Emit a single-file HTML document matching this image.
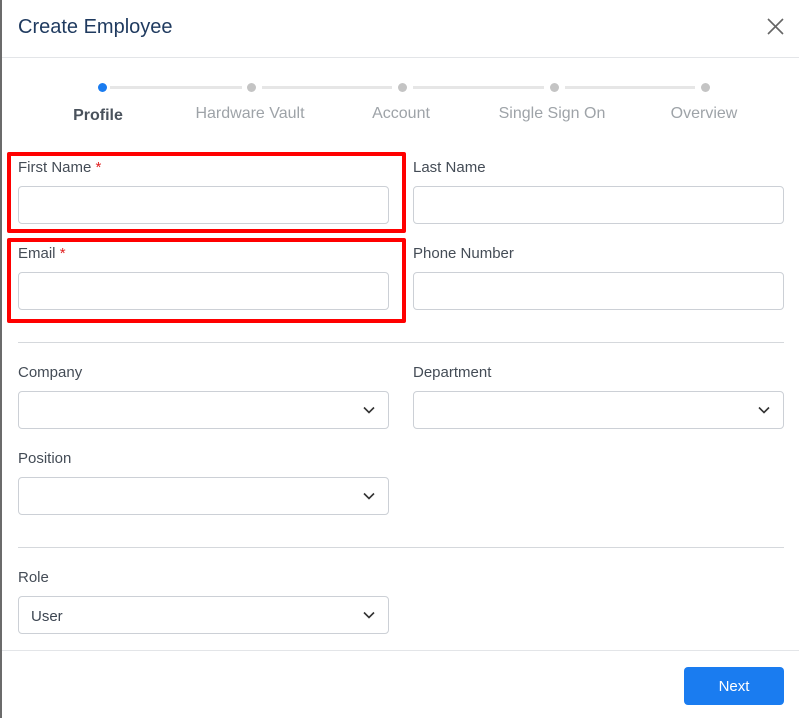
<!DOCTYPE html>
<html><head><style>
*{box-sizing:border-box;margin:0;padding:0}
body{width:799px;height:718px;background:#fff;font-family:"Liberation Sans",sans-serif;position:relative;overflow:hidden;color:#3d4652}
.a{position:absolute}
.lbl{position:absolute;font-size:15px;color:#444c56}
.inp{position:absolute;height:38px;border:1px solid #ccd0d6;border-radius:4px;background:#fff}
.chev{position:absolute;right:13px;top:14px}
.req{color:#e02020}
.red{position:absolute;border:4px solid #f00;border-radius:2px}
.dot{position:absolute;width:9px;height:9px;border-radius:50%;background:#c4c4c4;top:83px}
.line{position:absolute;height:3px;background:#e6e6e6;top:86px}
.st{position:absolute;top:105px;font-size:16px;color:#9ea3a8;text-align:center;width:160px}
.hr{position:absolute;height:1px;background:#d5d8dc}
</style></head><body>
<div class="a" style="left:0;top:0;width:2px;height:718px;background:#6b6b6b"></div>
<div class="a" style="left:18px;top:16px;font-size:20px;color:#1f3a5f">Create Employee</div>
<svg class="a" style="left:766px;top:17px" width="19" height="19" viewBox="0 0 19 19"><path d="M2 2L17 17M17 2L2 17" stroke="#666" stroke-width="1.6"/></svg>
<div class="hr" style="left:2px;top:57px;width:797px;background:#e3e5e8"></div>

<div class="line" style="left:110px;width:132px"></div>
<div class="line" style="left:262px;width:130px"></div>
<div class="line" style="left:413px;width:131px"></div>
<div class="line" style="left:565px;width:130px"></div>
<div class="dot" style="left:98px;background:#1a7cf0"></div>
<div class="dot" style="left:247px"></div>
<div class="dot" style="left:398px"></div>
<div class="dot" style="left:550px"></div>
<div class="dot" style="left:701px"></div>
<div class="st" style="left:18px;top:107px;color:#4a525c;font-weight:bold">Profile</div>
<div class="st" style="left:170px">Hardware Vault</div>
<div class="st" style="left:321px">Account</div>
<div class="st" style="left:472px">Single Sign On</div>
<div class="st" style="left:624px">Overview</div>

<div class="red" style="left:7px;top:152px;width:399px;height:81px"></div>
<div class="red" style="left:7px;top:238px;width:399px;height:85px"></div>

<div class="lbl" style="left:18px;top:159px">First Name <span class="req">*</span></div>
<div class="inp" style="left:18px;top:186px;width:371px"></div>
<div class="lbl" style="left:413px;top:159px">Last Name</div>
<div class="inp" style="left:413px;top:186px;width:371px"></div>
<div class="lbl" style="left:18px;top:245px">Email <span class="req">*</span></div>
<div class="inp" style="left:18px;top:272px;width:371px"></div>
<div class="lbl" style="left:413px;top:245px">Phone Number</div>
<div class="inp" style="left:413px;top:272px;width:371px"></div>

<div class="hr" style="left:18px;top:342px;width:766px"></div>

<div class="lbl" style="left:18px;top:364px">Company</div>
<div class="inp" style="left:18px;top:391px;width:371px"><svg class="chev" width="12" height="8" viewBox="0 0 12 8"><path d="M1 1.5L6 6.5L11 1.5" stroke="#333" stroke-width="1.6" fill="none"/></svg></div>
<div class="lbl" style="left:413px;top:364px">Department</div>
<div class="inp" style="left:413px;top:391px;width:371px"><svg class="chev" width="12" height="8" viewBox="0 0 12 8"><path d="M1 1.5L6 6.5L11 1.5" stroke="#333" stroke-width="1.6" fill="none"/></svg></div>
<div class="lbl" style="left:18px;top:450px">Position</div>
<div class="inp" style="left:18px;top:477px;width:371px"><svg class="chev" width="12" height="8" viewBox="0 0 12 8"><path d="M1 1.5L6 6.5L11 1.5" stroke="#333" stroke-width="1.6" fill="none"/></svg></div>

<div class="hr" style="left:18px;top:547px;width:766px"></div>

<div class="lbl" style="left:18px;top:569px">Role</div>
<div class="inp" style="left:18px;top:596px;width:371px"><span class="a" style="left:12px;top:11px;font-size:15px;color:#3d4652">User</span><svg class="chev" width="12" height="8" viewBox="0 0 12 8"><path d="M1 1.5L6 6.5L11 1.5" stroke="#333" stroke-width="1.6" fill="none"/></svg></div>

<div class="hr" style="left:2px;top:650px;width:797px;background:#e3e5e8"></div>
<div class="a" style="left:684px;top:667px;width:100px;height:38px;background:#1a7cf0;border-radius:4px;color:#fff;font-size:15px;text-align:center;line-height:40px">Next</div>
</body></html>
